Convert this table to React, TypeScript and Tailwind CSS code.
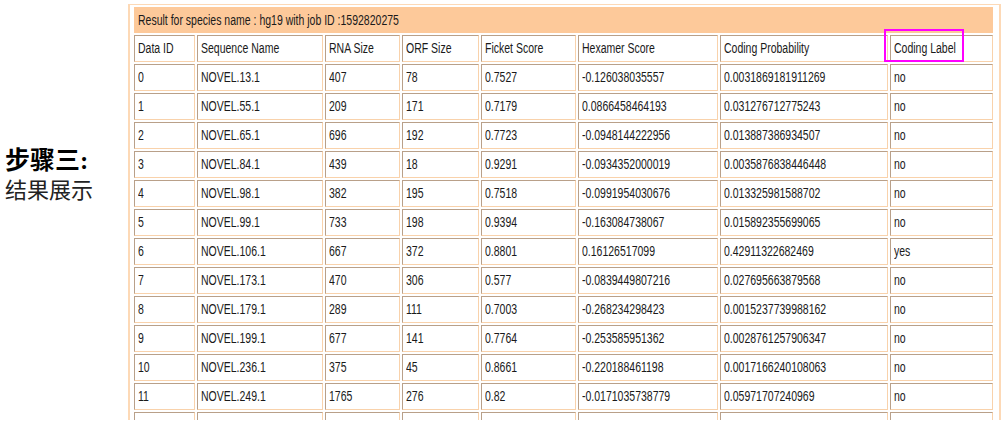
import React from 'react';

const rows: string[][] = [
    ['0', 'NOVEL.13.1', '407', '78', '0.7527', '-0.126038035557', '0.0031869181911269', 'no'],
    ['1', 'NOVEL.55.1', '209', '171', '0.7179', '0.0866458464193', '0.031276712775243', 'no'],
    ['2', 'NOVEL.65.1', '696', '192', '0.7723', '-0.0948144222956', '0.013887386934507', 'no'],
    ['3', 'NOVEL.84.1', '439', '18', '0.9291', '-0.0934352000019', '0.0035876838446448', 'no'],
    ['4', 'NOVEL.98.1', '382', '195', '0.7518', '-0.0991954030676', '0.013325981588702', 'no'],
    ['5', 'NOVEL.99.1', '733', '198', '0.9394', '-0.163084738067', '0.015892355699065', 'no'],
    ['6', 'NOVEL.106.1', '667', '372', '0.8801', '0.16126517099', '0.42911322682469', 'yes'],
    ['7', 'NOVEL.173.1', '470', '306', '0.577', '-0.0839449807216', '0.027695663879568', 'no'],
    ['8', 'NOVEL.179.1', '289', '111', '0.7003', '-0.268234298423', '0.0015237739988162', 'no'],
    ['9', 'NOVEL.199.1', '677', '141', '0.7764', '-0.253585951362', '0.0028761257906347', 'no'],
    ['10', 'NOVEL.236.1', '375', '45', '0.8661', '-0.220188461198', '0.0017166240108063', 'no'],
    ['11', 'NOVEL.249.1', '1765', '276', '0.82', '-0.0171035738779', '0.05971707240969', 'no'],
    ['12', 'NOVEL.261.1', '396', '132', '0.8846', '-0.0123487547776', '0.0144796394339833', 'no'],
];

const headers = ['Data ID', 'Sequence Name', 'RNA Size', 'ORF Size', 'Ficket Score', 'Hexamer Score', 'Coding Probability', 'Coding Label'];
const widths = ['w-[61px]', 'w-[126px]', 'w-[75px]', 'w-[77px]', 'w-[95px]', 'w-[140px]', 'w-[168px]', 'w-[103px]'];

// inset-style cell border like the old html table border=1
const cell = 'h-[27px] px-[3px] text-left font-normal align-middle border border-t-[#b9a089] border-l-[#b9a089] border-b-[#f9d2ab] border-r-[#f9d2ab] whitespace-nowrap';

// the screenshot text is squeezed horizontally
const Txt = ({ children }: { children: React.ReactNode }) => (
    <span className="inline-block origin-left scale-x-[0.75]">{children}</span>
);

const App: React.FC = () => {
    return (
        <div className="w-[1003px] h-[435px] bg-white flex overflow-hidden">
            {/* left caption */}
            <div className="w-[128px] shrink-0 pt-[147px] pl-[5px] text-black leading-[28px]" style={{ fontFamily: '"Liberation Serif", "Noto Sans CJK SC", serif' }}>
                <div className="text-[25px] font-bold">步骤三:</div>
                <div className="mt-[2px] text-[22px] text-[#222]">结果展示</div>
            </div>

            {/* result table */}
            <div className="mt-[4px] h-[416px] w-[873px] border-x-2 border-t border-[#fdd9b6] pl-[2px] overflow-hidden relative">
                <table
                    className="table-fixed border-separate border-spacing-[2px] text-[14px] text-[#1a1a1a]"
                    style={{ fontFamily: '"Liberation Sans", Arial, sans-serif' }}
                >
                    <thead>
                        <tr>
                            <th colSpan={8} className="h-[26px] px-[3px] text-left font-normal bg-[#fdc99a] border border-[#fdc99a]">
                                <Txt>Result for species name : hg19 with job ID :1592820275</Txt>
                            </th>
                        </tr>
                        <tr>
                            {headers.map((h, i) => (
                                <th key={h} className={`${cell} ${widths[i]}`}><Txt>{h}</Txt></th>
                            ))}
                        </tr>
                    </thead>
                    <tbody>
                        {rows.map(r => (
                            <tr key={r[0]}>
                                {r.map((v, i) => (
                                    <td key={i} className={cell}><Txt>{v}</Txt></td>
                                ))}
                            </tr>
                        ))}
                    </tbody>
                </table>

                {/* highlight box around Coding Label */}
                <div className="absolute left-[754px] top-[24px] w-[80px] h-[33px] border-2 border-[#ff00ff]" />
            </div>
        </div>
    );
};

export default App;
